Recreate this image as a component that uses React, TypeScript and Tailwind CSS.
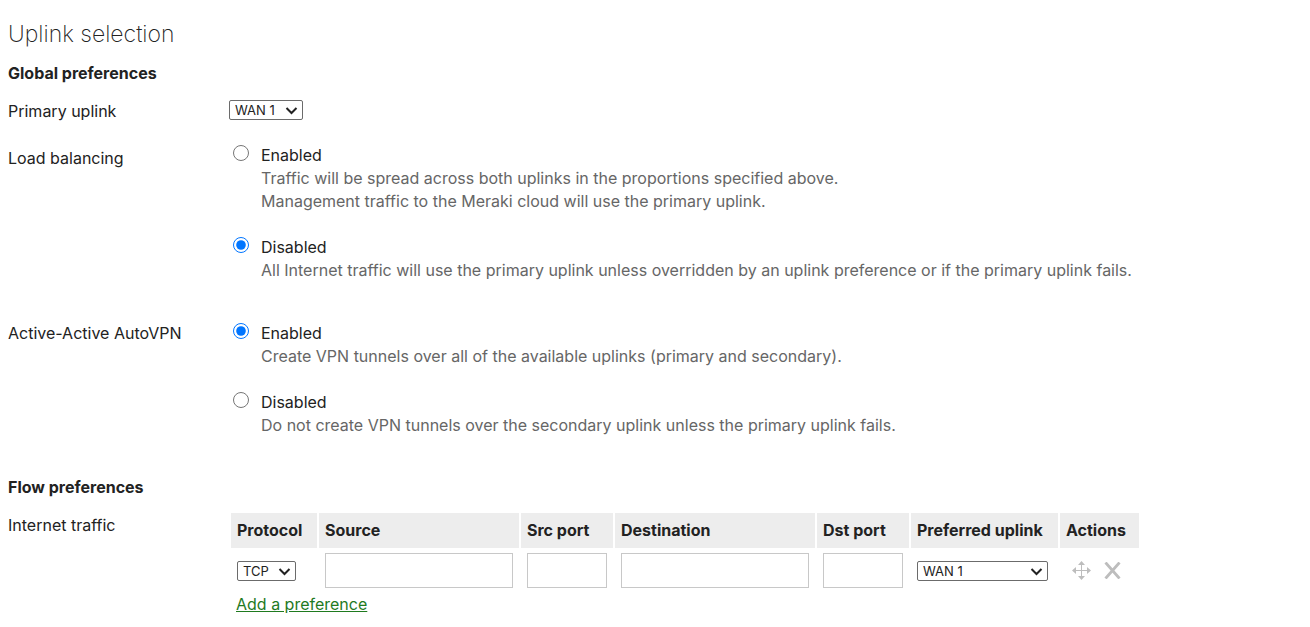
import React from 'react';

type RadioOption = {
  value: string;
  label: string;
  lines: string[];
};

const loadBalancing: RadioOption[] = [
  {
    value: 'enabled',
    label: 'Enabled',
    lines: [
      'Traffic will be spread across both uplinks in the proportions specified above.',
      'Management traffic to the Meraki cloud will use the primary uplink.',
    ],
  },
  {
    value: 'disabled',
    label: 'Disabled',
    lines: [
      'All Internet traffic will use the primary uplink unless overridden by an uplink preference or if the primary uplink fails.',
    ],
  },
];

const autoVpn: RadioOption[] = [
  {
    value: 'enabled',
    label: 'Enabled',
    lines: ['Create VPN tunnels over all of the available uplinks (primary and secondary).'],
  },
  {
    value: 'disabled',
    label: 'Disabled',
    lines: ['Do not create VPN tunnels over the secondary uplink unless the primary uplink fails.'],
  },
];

const thClass = 'h-[35px] bg-[#ededed] px-[6px] text-left font-bold whitespace-nowrap';
const tdClass = 'px-[6px] py-[3px] align-middle';
const inputClass = 'block h-[35px] border border-[#c8c8c8] bg-white px-2';

const Select: React.FC<{ id?: string; label?: string; options: string[]; width: string }> = ({
  id,
  label,
  options,
  width,
}) => (
  <div className={`relative ${width}`}>
    <select
      id={id}
      aria-label={label}
      className="block h-5 w-full appearance-none rounded-[2px] border border-[#6b6b6b] bg-white pr-5 pl-[5px] text-[13px] leading-[18px] text-[#222222]"
    >
      {options.map((option) => (
        <option key={option}>{option}</option>
      ))}
    </select>
    <svg
      className="pointer-events-none absolute top-[7px] right-[5px]"
      width="13"
      height="8"
      viewBox="0 0 13 8"
      fill="none"
      stroke="#222222"
      strokeWidth="2"
      aria-hidden="true"
    >
      <path d="M1.5 1l5 5 5-5" />
    </svg>
  </div>
);

const RadioGroup: React.FC<{ name: string; options: RadioOption[]; selected: string }> = ({
  name,
  options,
  selected,
}) => (
  <div className="flex flex-col gap-[23px]">
    {options.map((option) => {
      const id = `${name}-${option.value}`;
      return (
        <div key={id} className="flex gap-3 pl-1">
          <input
            type="radio"
            id={id}
            name={name}
            defaultChecked={option.value === selected}
            className="mt-[1px] size-4 shrink-0"
          />
          <div>
            <label htmlFor={id}>{option.label}</label>
            {option.lines.map((line) => (
              <p key={line} className="text-[#666666]">{line}</p>
            ))}
          </div>
        </div>
      );
    })}
  </div>
);

const MoveIcon = () => (
  <svg width="19" height="19" viewBox="0 0 19 19" fill="#bdbdbd" aria-hidden="true">
    <path d="M9 3h1v13H9zM3 9h13v1H3z" />
    <path d="M9.5 0l3.5 4h-7zM9.5 19l3.5-4h-7zM0 9.5l4-3.5v7zM19 9.5l-4-3.5v7z" />
  </svg>
);

const DeleteIcon = () => (
  <svg width="17" height="17" viewBox="0 0 17 17" fill="none" stroke="#bdbdbd" strokeWidth="2.8" aria-hidden="true">
    <path d="M1.5 0.5l14 16M15.5 0.5l-14 16" />
  </svg>
);

export default function App() {
  return (
    <main className="bg-white px-2 pt-4 pb-3 font-[Inter,'Liberation_Sans',sans-serif] text-[16px] leading-[23px] text-[#222222]">
      <h1 className="text-[23px] leading-9 font-extralight">Uplink selection</h1>

      <h2 className="mt-[10px] font-bold">Global preferences</h2>

      <div className="mt-[15px] grid grid-cols-[221px_1fr]">
        <label htmlFor="primary-uplink">Primary uplink</label>
        <Select id="primary-uplink" options={['WAN 1', 'WAN 2']} width="w-[74px]" />
      </div>

      <div className="mt-[21px] grid grid-cols-[221px_1fr]">
        <div className="pt-[3px]">Load balancing</div>
        <RadioGroup name="load-balancing" options={loadBalancing} selected="disabled" />
      </div>

      <div className="mt-10 grid grid-cols-[221px_1fr]">
        <div>Active-Active AutoVPN</div>
        <RadioGroup name="auto-vpn" options={autoVpn} selected="enabled" />
      </div>

      <h2 className="mt-[39px] font-bold">Flow preferences</h2>

      <div className="mt-3 grid grid-cols-[221px_1fr]">
        <div className="pt-[3px]">Internet traffic</div>
        <div>
          <table className="border-separate border-spacing-[2px]">
            <thead>
              <tr>
                <th className={`${thClass} w-[86px]`}>Protocol</th>
                <th className={`${thClass} w-[200px]`}>Source</th>
                <th className={`${thClass} w-[92px]`}>Src port</th>
                <th className={`${thClass} w-[200px]`}>Destination</th>
                <th className={`${thClass} w-[92px]`}>Dst port</th>
                <th className={`${thClass} w-[147px]`}>Preferred uplink</th>
                <th className={`${thClass} w-[79px]`}>Actions</th>
              </tr>
            </thead>
            <tbody>
              <tr>
                <td className={tdClass}>
                  <Select label="Protocol" options={['TCP', 'UDP', 'Any']} width="w-[59px]" />
                </td>
                <td className={tdClass}>
                  <input type="text" aria-label="Source" className={`${inputClass} w-[188px]`} />
                </td>
                <td className={tdClass}>
                  <input type="text" aria-label="Src port" className={`${inputClass} w-20`} />
                </td>
                <td className={tdClass}>
                  <input type="text" aria-label="Destination" className={`${inputClass} w-[188px]`} />
                </td>
                <td className={tdClass}>
                  <input type="text" aria-label="Dst port" className={`${inputClass} w-20`} />
                </td>
                <td className={tdClass}>
                  <Select label="Preferred uplink" options={['WAN 1', 'WAN 2']} width="w-[131px]" />
                </td>
                <td className={tdClass}>
                  <div className="flex items-center gap-[13px] pl-[6px]">
                    <button type="button" aria-label="Move preference">
                      <MoveIcon />
                    </button>
                    <button type="button" aria-label="Delete preference">
                      <DeleteIcon />
                    </button>
                  </div>
                </td>
              </tr>
            </tbody>
          </table>
          <a href="#add" className="ml-[7px] text-[#1f7a1f] underline">Add a preference</a>
        </div>
      </div>
    </main>
  );
}
